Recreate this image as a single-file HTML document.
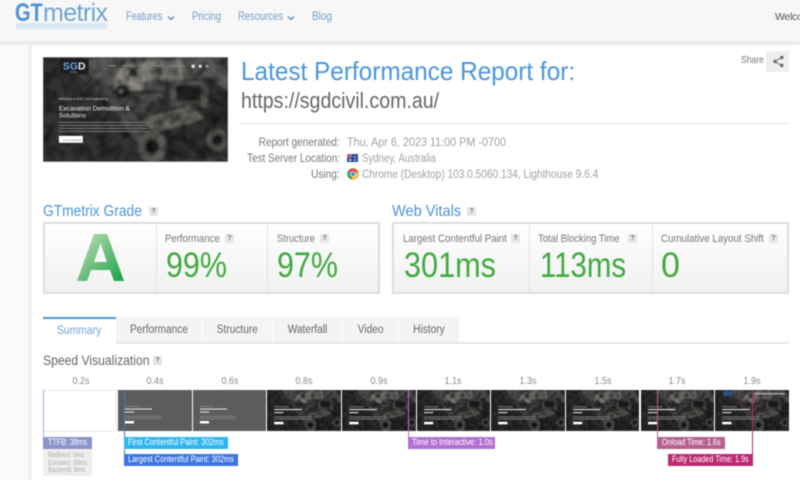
<!DOCTYPE html>
<html><head><meta charset="utf-8"><title>Latest Performance Report</title>
<style>
html,body{margin:0;padding:0;width:800px;height:480px;overflow:hidden;background:#fff}
#r{position:relative;width:800px;height:480px;overflow:hidden;font-family:"Liberation Sans",sans-serif;filter:blur(.4px);background:#fff}
.a{position:absolute}
.t{position:absolute;white-space:nowrap;line-height:1;transform:scaleX(var(--s,1));transform-origin:0 50%}
.rr{transform-origin:100% 50%}
.q{position:absolute;width:9px;height:9px;background:#e6e6e6;color:#777;font-size:7px;line-height:9px;text-align:center;font-weight:bold}
.nav{color:#6f9fca;font-size:11.5px;top:12px}
.m{font-size:11.5px;color:#777}
.v{font-size:11.5px;color:#a2a2a2;left:347px}
.h{color:#4d94d6;font-size:15.5px;top:204px}
.lb{font-size:11px;color:#777;top:233.5px}
.big{color:#3fab3f;font-size:35px;top:248px}
.box{position:absolute;top:222px;height:68px;border:2px solid #dcdcdc;background:linear-gradient(#fff,#f1f1f1)}
.dv{position:absolute;top:224px;height:68px;width:1px;background:#e3e3e3}
.tab{position:absolute;top:317px;height:25px;background:#f4f4f4;color:#666;font-size:11.5px;line-height:27px;text-align:center;white-space:nowrap}
.tab span{display:inline-block;transform:scaleX(.88)}
.fl{position:absolute;top:376px;width:74px;text-align:center;font-size:10.5px;color:#888;line-height:11px;transform:scaleX(.85)}
.tag{position:absolute;color:#fff;font-size:9.5px;line-height:12px;height:12px;white-space:nowrap;padding-left:4px;box-sizing:border-box}
.tag span{display:inline-block;transform:scaleX(var(--s,.78));transform-origin:0 50%}
.ln{position:absolute;width:1px}
.d span{display:block;transform:scaleX(.78);transform-origin:0 50%}
</style></head><body>
<div id="r">
<!-- left strip and header -->
<div class="a" style="left:0;top:45px;width:28px;height:435px;background:#fbfbfb"></div>
<div class="a" style="left:28px;top:45px;width:4px;height:435px;background:#f0f0f0"></div>
<div class="a" style="left:0;top:0;width:800px;height:41px;background:#f7f7f7"></div>
<div class="a" style="left:0;top:41px;width:800px;height:4px;background:#ebebeb"></div>

<!-- logo -->
<div class="a" style="left:16px;top:23px;width:91px;height:6px;background:#dce8f3"></div>
<div class="t" style="left:15px;top:1px;font-size:25px;font-weight:bold;color:#4c94d4;--s:.8">GT</div>
<div class="t" style="left:43px;top:1px;font-size:25px;color:#6ea4d2;letter-spacing:-.6px">metrix</div>

<div class="t nav" style="left:126px;--s:.8">Features</div>
<svg class="a" style="left:167px;top:15px" width="8" height="6"><path d="M1 1.5L4 4.5L7 1.5" fill="none" stroke="#6f9fca" stroke-width="1.6"/></svg>
<div class="t nav" style="left:192px;--s:.83">Pricing</div>
<div class="t nav" style="left:238px;--s:.82">Resources</div>
<svg class="a" style="left:287px;top:15px" width="8" height="6"><path d="M1 1.5L4 4.5L7 1.5" fill="none" stroke="#6f9fca" stroke-width="1.6"/></svg>
<div class="t nav" style="left:312px;--s:.87">Blog</div>
<div class="t" style="left:775px;top:12px;font-size:10.5px;color:#555;letter-spacing:-.3px">Welcome</div>

<!-- thumbnail -->
<svg class="a" style="left:43px;top:57px" width="185" height="105" viewBox="0 0 186 105">
<defs>
<filter id="b"><feGaussianBlur stdDeviation="1.3"/></filter>
<filter id="n" x="0" y="0" width="100%" height="100%"><feTurbulence type="fractalNoise" baseFrequency=".09" numOctaves="2" seed="7"/><feColorMatrix values="0 0 0 0 0 0 0 0 0 0 0 0 0 0 0 1.1 0 0 0 -.4"/></filter>
<g id="photo">
<rect width="186" height="105" fill="#4a4846"/>
<g filter="url(#b)">
<path d="M40 0H186V45L120 40L60 25L40 10Z" fill="#5a5856"/>
<path d="M0 0H40L30 12L70 50L105 105H0Z" fill="#333231"/>
<rect x="98" y="3" width="42" height="20" fill="#7a7874"/>
<path d="M72 22L82 6H102V34H72Z" fill="#8e8b86"/>
<rect x="86" y="10" width="9" height="9" fill="#2a2a28"/>
<rect x="70" y="33" width="50" height="4" fill="#33322f"/>
<circle cx="79" cy="34" r="6.500" fill="#1e1d1c"/><circle cx="79" cy="34" r="2.500" fill="#7a7874"/>
<path d="M124 25L168 20L186 35V100L125 105L100 70L118 48Z" fill="#2f2e2d"/>
<rect x="128" y="24" width="38" height="26" fill="#55534f"/>
<rect x="134" y="28" width="25" height="16" fill="#222"/>
<path d="M100 62L150 48L162 62L112 76Z" fill="#6a6864"/>
<circle cx="110" cy="90" r="15" fill="#5c5a56"/><circle cx="110" cy="90" r="7" fill="#1d1c1b"/>
<circle cx="175" cy="83" r="11" fill="#55534f"/><circle cx="175" cy="83" r="5" fill="#1d1c1b"/>
</g>
<rect width="186" height="105" filter="url(#n)"/>
</g>
</defs>
<use href="#photo"/>
<rect width="186" height="105" fill="none" stroke="#999" stroke-width=".6"/>
<rect x="17" y="1" width="29" height="16" fill="#1f1f21"/>
<text x="20" y="12.500" font-family="Liberation Sans" font-weight="bold" font-size="10.500" fill="#5ea6e6">SG<tspan fill="#e8e8e8">D</tspan></text>
<text x="27" y="16" font-family="Liberation Sans" font-size="3" fill="#bbb">CIVIL</text>
<g fill="#888"><rect x="65" y="8" width="8" height="1"/><rect x="80" y="8" width="10" height="1"/><rect x="97" y="8" width="9" height="1"/><rect x="112" y="8" width="9" height="1"/><rect x="128" y="8" width="14" height="1"/></g>
<circle cx="151" cy="9" r="1.800" fill="#ddd"/><circle cx="158" cy="9" r="1.800" fill="#ccc"/><circle cx="165" cy="9" r="1.800" fill="#888"/>
<text x="16" y="43" font-family="Liberation Sans" font-size="3.200" fill="#cfcfcf">Welcome to SGD Civil Engineering</text>
<text x="16" y="53.500" font-family="Liberation Sans" font-size="6.600" fill="#f0f0f0">Excavation Demolition &amp;</text>
<text x="16" y="60.500" font-family="Liberation Sans" font-size="6.600" fill="#f0f0f0">Solutions</text>
<g fill="#777"><rect x="16" y="65" width="92" height="1"/><rect x="16" y="68" width="92" height="1"/><rect x="16" y="71" width="90" height="1"/><rect x="16" y="74" width="92" height="1"/></g>
<rect x="16" y="79" width="24" height="7" fill="#fff"/>
<text x="20" y="84" font-family="Liberation Sans" font-size="3" fill="#777">Our Company</text>
</svg>

<!-- title -->
<div class="t" style="left:241px;top:58px;font-size:26px;color:#4b96da;--s:.936">Latest Performance Report for:</div>
<div class="t" style="left:241px;top:90px;font-size:22px;color:#666;--s:.89">https://sgdcivil.com.au/</div>
<div class="a" style="left:240px;top:123px;width:549px;height:1px;background:#e5e5e5"></div>
<div class="t" style="left:741px;top:55px;font-size:10.5px;color:#777;--s:.82">Share</div>
<div class="a" style="left:766px;top:51px;width:23px;height:21px;background:#eee"></div>
<svg class="a" style="left:772px;top:55px" width="13" height="13" viewBox="0 0 13 13"><path d="M9.5 2.500L3 6.500L9.500 10.500" fill="none" stroke="#666" stroke-width="1"/><circle cx="9.800" cy="2.500" r="1.700" fill="#666"/><circle cx="3" cy="6.500" r="1.700" fill="#666"/><circle cx="9.800" cy="10.500" r="1.700" fill="#666"/></svg>

<div class="t m rr" style="right:460px;top:137.5px;--s:.875">Report generated:</div>
<div class="t m rr" style="right:460px;top:153.5px;--s:.86">Test Server Location:</div>
<div class="t m rr" style="right:460px;top:169.5px;--s:.875">Using:</div>
<div class="t v" style="top:137.5px;--s:.94">Thu, Apr 6, 2023 11:00 PM -0700</div>
<svg class="a" style="left:347px;top:154px" width="11" height="8"><rect width="11" height="8" fill="#2b4a96"/><rect width="5" height="4" fill="#a36a86"/><circle cx="8" cy="3" r=".8" fill="#fff"/><circle cx="8" cy="6" r=".8" fill="#fff"/><circle cx="3" cy="6" r="1" fill="#fff"/></svg>
<div class="t v" style="left:362px;top:153.5px;--s:.84">Sydney, Australia</div>
<svg class="a" style="left:347px;top:168px" width="12" height="12" viewBox="0 0 12 12"><circle cx="6" cy="6" r="5.700" fill="#dd4b3e"/><path d="M6 6L1 3.200A5.700 5.700 0 0 0 4.500 11.500Z" fill="#3aa757"/><path d="M6 6L11.300 4A5.700 5.700 0 0 1 4.500 11.500Z" fill="#fbc02d"/><circle cx="6" cy="6" r="2.800" fill="#fff"/><circle cx="6" cy="6" r="2.100" fill="#4a8fe0"/></svg>
<div class="t v" style="left:362px;top:169.5px;--s:.88">Chrome (Desktop) 103.0.5060.134, Lighthouse 9.6.4</div>

<!-- grade -->
<div class="t h" style="left:43px;--s:.89">GTmetrix Grade</div>
<div class="q" style="left:149px;top:207px">?</div>
<div class="box" style="left:43px;width:333px"></div>
<div class="dv" style="left:156px"></div><div class="dv" style="left:267px"></div>
<svg class="a" style="left:76px;top:232px" width="50" height="50" viewBox="0 0 50 50">
<defs><linearGradient id="g" x1="0" y1="0" x2="1" y2="1"><stop offset="0" stop-color="#c5e0bd"/><stop offset=".55" stop-color="#66bc78"/><stop offset="1" stop-color="#16a349"/></linearGradient></defs>
<path fill-rule="evenodd" d="M18 2H31L48 49H38L34 38H15L11 49H1ZM24.500 11L18 30H31Z" fill="url(#g)"/></svg>
<div class="t lb" style="left:165px;--s:.87">Performance</div><div class="q" style="left:225px;top:234px">?</div>
<div class="t lb" style="left:277px;--s:.85">Structure</div><div class="q" style="left:320px;top:234px">?</div>
<div class="t big" style="left:166px;--s:.87">99%</div>
<div class="t big" style="left:277px;--s:.87">97%</div>

<!-- vitals -->
<div class="t h" style="left:392px;--s:.94">Web Vitals</div>
<div class="q" style="left:467px;top:207px">?</div>
<div class="box" style="left:392px;width:393px"></div>
<div class="dv" style="left:529px"></div><div class="dv" style="left:652px"></div>
<div class="t lb" style="left:403px;--s:.88">Largest Contentful Paint</div><div class="q" style="left:511px;top:234px">?</div>
<div class="t lb" style="left:538px;--s:.86">Total Blocking Time</div><div class="q" style="left:628px;top:234px">?</div>
<div class="t lb" style="left:661px;--s:.885">Cumulative Layout Shift</div><div class="q" style="left:769px;top:234px">?</div>
<div class="t big" style="left:404px;--s:.875">301ms</div>
<div class="t big" style="left:540px;--s:.84">113ms</div>
<div class="t big" style="left:661px;--s:.97">0</div>

<!-- tabs -->
<div class="a" style="left:116px;top:342px;width:673px;height:2px;background:#e6e6e6"></div>
<div class="a" style="left:43px;top:317px;width:73px;height:2px;background:#4b96da"></div>
<div class="t" style="left:57px;top:325.5px;font-size:11.5px;color:#6ea4d6;--s:.9">Summary</div>
<div class="tab" style="left:116px;width:86px"><span>Performance</span></div>
<div class="tab" style="left:203px;width:69px"><span>Structure</span></div>
<div class="tab" style="left:273px;width:69px"><span>Waterfall</span></div>
<div class="tab" style="left:343px;width:55px"><span>Video</span></div>
<div class="tab" style="left:399px;width:60px"><span>History</span></div>

<div class="t" style="left:43px;top:354px;font-size:13.5px;color:#666;--s:.9">Speed Visualization</div>
<div class="q" style="left:153px;top:356px">?</div>

<!-- filmstrip labels -->
<div class="fl" style="left:44px">0.2s</div><div class="fl" style="left:118px">0.4s</div><div class="fl" style="left:193px">0.6s</div><div class="fl" style="left:267px">0.8s</div><div class="fl" style="left:342px">0.9s</div><div class="fl" style="left:416px">1.1s</div><div class="fl" style="left:491px">1.3s</div><div class="fl" style="left:566px">1.5s</div><div class="fl" style="left:640px">1.7s</div><div class="fl" style="left:715px">1.9s</div>

<svg width="0" height="0" style="position:absolute"><defs>
<g id="tx"><rect x="7" y="16" width="14" height=".8" fill="#888"/><rect x="7" y="18.500" width="27" height="1.100" fill="#ddd"/><rect x="7" y="21.500" width="9" height="1.100" fill="#ddd"/><g fill="#8a8a8a"><rect x="7" y="26" width="36" height=".8"/><rect x="7" y="28" width="36" height=".8"/></g><rect x="7" y="31" width="9" height="2.500" fill="#fff"/></g>
<g id="ph"><g transform="scale(.387 .381)"><use href="#photo"/></g><rect width="72" height="40" fill="#000" opacity=".15"/></g>
</defs></svg>

<div class="a" style="left:43px;top:390px;width:72px;height:40px;border:1px solid #e6e6e6;background:#fff"></div>
<div class="a" style="left:118px;top:390px;width:74px;height:41px;background:#5d5c5b"><svg width="74" height="41"><use href="#tx"/></svg></div>
<div class="a" style="left:193px;top:390px;width:73px;height:41px;background:#5d5c5b"><svg width="73" height="41"><use href="#tx"/></svg></div>
<svg class="a" style="left:267px;top:390px" width="74" height="41" viewBox="0 0 72 40" preserveAspectRatio="none"><use href="#ph"/><use href="#tx"/></svg>
<svg class="a" style="left:342px;top:390px" width="74" height="41" viewBox="0 0 72 40" preserveAspectRatio="none"><use href="#ph"/><use href="#tx"/></svg>
<svg class="a" style="left:417px;top:390px" width="73" height="41" viewBox="0 0 72 40" preserveAspectRatio="none"><use href="#ph"/><use href="#tx"/></svg>
<svg class="a" style="left:491px;top:390px" width="74" height="41" viewBox="0 0 72 40" preserveAspectRatio="none"><use href="#ph"/><use href="#tx"/></svg>
<svg class="a" style="left:566px;top:390px" width="73" height="41" viewBox="0 0 72 40" preserveAspectRatio="none"><use href="#ph"/><use href="#tx"/></svg>
<svg class="a" style="left:641px;top:390px" width="73" height="41" viewBox="0 0 72 40" preserveAspectRatio="none"><use href="#ph"/><use href="#tx"/></svg>
<svg class="a" style="left:715px;top:390px" width="74" height="41" viewBox="0 0 72 40" preserveAspectRatio="none"><use href="#ph"/><use href="#tx"/><rect x="8" y="1" width="9" height="5" fill="#2f4f80"/><rect x="38" y="3" width="30" height="1.200" fill="#bbb"/></svg>

<!-- markers -->
<div class="ln" style="left:43px;top:390px;height:47px;background:#a9b0d8"></div>
<div class="tag" style="left:43px;top:437px;width:49px;background:#8a94c9;padding-left:5px;--s:.75"><span>TTFB: 38ms</span></div>
<div class="a d" style="left:43px;top:449px;width:49px;height:27px;background:#eee;color:#aaa;font-size:7.5px;line-height:7.5px;padding:2px 0 0 5px;box-sizing:border-box;white-space:nowrap"><span>Redirect: 0ms</span><span>Connect: 30ms</span><span>Backend: 8ms</span></div>
<div class="ln" style="left:124px;top:390px;height:64px;background:#3d75e0"></div>
<div class="tag" style="left:124px;top:437px;width:104px;background:#2fb6f0"><span>First Contentful Paint: 302ms</span></div>
<div class="tag" style="left:124px;top:454px;width:114px;background:#3d75e0"><span>Largest Contentful Paint: 302ms</span></div>
<div class="ln" style="left:408px;top:390px;height:47px;background:#b26fd2"></div>
<div class="tag" style="left:408px;top:437px;width:87px;background:#b26fd2;--s:.8"><span>Time to Interactive: 1.0s</span></div>
<div class="ln" style="left:657px;top:390px;height:47px;background:#b5608f"></div>
<div class="tag" style="left:657px;top:437px;width:68px;background:#b5608f;padding-left:5px;--s:.76"><span>Onload Time: 1.6s</span></div>
<div class="ln" style="left:752px;top:390px;height:64px;background:#bb2a72"></div>
<div class="tag" style="left:668px;top:454px;width:85px;background:#bb2a72;--s:.76"><span>Fully Loaded Time: 1.9s</span></div>
</div>
</body></html>
